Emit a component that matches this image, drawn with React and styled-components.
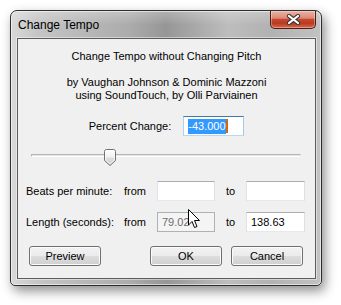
import React from 'react';
import styled, { createGlobalStyle } from 'styled-components';

const Global = createGlobalStyle`
  html, body { margin: 0; padding: 0; background: #ffffff; }
  body { font-family: "Liberation Sans", Arial, sans-serif; }
`;

const Page = styled.div`
  width: 341px;
  height: 305px;
  box-sizing: border-box;
  padding: 10px 0 0 10px;
  background: #fff;
  overflow: hidden;
`;

const Window = styled.div`
  position: relative;
  width: 312px;
  box-sizing: border-box;
  border: 1px solid #2e2e2e;
  border-radius: 7px 7px 5px 5px;
  padding: 0 5px 6px 6px;
  background:
    linear-gradient(180deg, rgba(255,255,255,0.25) 0px, rgba(255,255,255,0) 14px),
    linear-gradient(90deg, #d9d9d9 0%, #c6c6c6 8%, #b9b9b9 22%, #acacac 38%, #969696 50%, #a6a6a6 58%, #bdbdbd 70%, #b2b2b2 84%, #c2c2c2 100%);
  box-shadow:
    inset 0 0 0 1px rgba(255,255,255,0.55),
    3px 5px 12px rgba(0,0,0,0.45);
`;

const TitleBar = styled.div`
  height: 27px;
  display: flex;
  justify-content: space-between;
  align-items: flex-start;
`;

const Title = styled.div`
  padding: 7px 0 0 1px;
  font-size: 12px;
  line-height: 14px;
  color: #000;
`;

const CloseButton = styled.div`
  width: 46px;
  height: 18px;
  box-sizing: border-box;
  border: 1px solid #4e1a12;
  border-top: none;
  border-radius: 0 0 5px 5px;
  background: linear-gradient(180deg, #eab1a3 0%, #dc8b78 42%, #c5492f 50%, #b9391f 72%, #d6694d 100%);
  box-shadow: inset 0 0 0 1px rgba(255,255,255,0.35);
  display: flex;
  align-items: center;
  justify-content: center;
`;

const Client = styled.div`
  border: 1px solid #5c5c5c;
  background: #f0f0f0;
  padding: 11px 0 12px;
  font-size: 11px;
  color: #000;
  box-shadow: 0 0 0 1px rgba(255,255,255,0.45);
`;

const Para = styled.div`
  text-align: center;
  line-height: 13px;
  margin-top: ${p => p.$gap || 0}px;
`;

const PercentRow = styled.div`
  margin-top: 14px;
  display: flex;
  justify-content: center;
  align-items: center;
  gap: 12px;
`;

const TextBox = styled.div`
  width: ${p => p.$w}px;
  height: 20px;
  box-sizing: border-box;
  border: 1px solid ${p => (p.$focus ? '#569de5' : '#abadb3')};
  border-color: ${p => (p.$focus ? '#3d7bad #a4c9e3 #b7d9ed #b5cfe7' : p.$disabled ? '#adb2b5' : '#abadb3 #dbdfe6 #e3e9ef #e2e3ea')};
  background: ${p => (p.$disabled ? '#f4f4f4' : '#fff')};
  color: ${p => (p.$disabled ? '#6d6d6d' : '#000')};
  padding-left: 4px;
  display: flex;
  align-items: center;
  font-size: 11px;
  line-height: 13px;
`;

const Selection = styled.span`
  background: #3399ff;
  color: #fff;
  padding: 1px 0;
`;

const Caret = styled.span`
  display: inline-block;
  width: 2px;
  height: 14px;
  background: #d06a10;
`;

const SliderRow = styled.div`
  position: relative;
  margin: 13px 14px 0 13px;
  height: 17px;
`;

const Track = styled.div`
  position: absolute;
  left: 0;
  right: 0;
  top: 5px;
  height: 3px;
  box-sizing: border-box;
  border: 1px solid;
  border-color: #b4b4b4 #e6e6e6 #ffffff #b4b4b4;
  border-radius: 1px;
  background: #e7e7e7;
`;

const Thumb = styled.svg`
  position: absolute;
  top: 0;
  display: block;
`;

const FieldGrid = styled.div`
  margin-top: 15px;
  padding-left: 8px;
  display: grid;
  grid-template-columns: 98px 33px 58px 31px 59px;
  row-gap: 11px;
  align-items: center;
`;

const Label = styled.div`
  line-height: 13px;
  padding-left: ${p => p.$pad || 0}px;
`;

const ButtonRow = styled.div`
  margin-top: 14px;
  padding: 0 12px 0 11px;
  display: flex;
  align-items: center;
`;

const Button = styled.div`
  width: 72px;
  height: 20px;
  box-sizing: border-box;
  border: 1px solid #707070;
  border-radius: 3px;
  background: linear-gradient(180deg, #f2f2f2 0%, #ebebeb 48%, #dddddd 52%, #cfcfcf 100%);
  box-shadow: inset 0 0 0 1px #fbfbfb;
  display: flex;
  align-items: center;
  justify-content: center;
  font-size: 11px;
  color: #000;
  margin-left: ${p => p.$ml || 0}px;
`;

const Cursor = styled.svg`
  position: absolute;
  left: 177px;
  top: 198px;
  display: block;
`;

export default function App() {
  return (
    <Page>
      <Global />
      <Window>
        <TitleBar>
          <Title>Change Tempo</Title>
          <CloseButton>
            <svg width="15" height="11" viewBox="0 0 15 11">
              <path d="M3 2 L12 9 M12 2 L3 9" stroke="#3a3a3a" strokeWidth="4.2" strokeLinecap="round" fill="none" />
              <path d="M3 2 L12 9 M12 2 L3 9" stroke="#ffffff" strokeWidth="2.2" strokeLinecap="round" fill="none" />
            </svg>
          </CloseButton>
        </TitleBar>
        <Client>
          <Para>Change Tempo without Changing Pitch</Para>
          <Para $gap={13}>
            by Vaughan Johnson &amp; Dominic Mazzoni
            <br />
            using SoundTouch, by Olli Parviainen
          </Para>
          <PercentRow>
            <Label>Percent Change:</Label>
            <TextBox $w={61} $focus>
              <Selection>-43.000</Selection>
              <Caret />
            </TextBox>
          </PercentRow>
          <SliderRow>
            <Track />
            <Thumb width="12" height="17" viewBox="0 0 12 17" style={{ left: `${0.27 * 270}px` }}>
              <defs>
                <linearGradient id="tg" x1="0" y1="0" x2="0" y2="1">
                  <stop offset="0" stopColor="#ffffff" />
                  <stop offset="0.45" stopColor="#f2f2f2" />
                  <stop offset="0.55" stopColor="#dedede" />
                  <stop offset="1" stopColor="#cfcfcf" />
                </linearGradient>
              </defs>
              <path d="M0.5 2.5 Q0.5 0.5 2.5 0.5 H9.5 Q11.5 0.5 11.5 2.5 V11.5 L6 16.5 L0.5 11.5 Z" fill="url(#tg)" stroke="#6f6f6f" />
              <path d="M1.5 2.5 Q1.5 1.5 2.5 1.5 H9.5 Q10.5 1.5 10.5 2.5 V11 L6 15 L1.5 11 Z" fill="none" stroke="#ffffff" strokeOpacity="0.7" />
            </Thumb>
          </SliderRow>
          <FieldGrid>
            <Label>Beats per minute:</Label>
            <Label>from</Label>
            <TextBox $w={58} />
            <Label $pad={11}>to</Label>
            <TextBox $w={59} />
            <Label>Length (seconds):</Label>
            <Label>from</Label>
            <TextBox $w={58} $disabled>79.02</TextBox>
            <Label $pad={11}>to</Label>
            <TextBox $w={59}>138.63</TextBox>
          </FieldGrid>
          <ButtonRow>
            <Button>Preview</Button>
            <Button $ml={49}>OK</Button>
            <Button $ml={9}>Cancel</Button>
          </ButtonRow>
        </Client>
        <Cursor width="12" height="20" viewBox="0 0 12 20">
          <path d="M0.5 0.5 V16 L4 12.5 L6.5 18.5 L9 17.5 L6.5 11.5 H11.5 Z" fill="#ffffff" stroke="#000000" strokeWidth="1" strokeLinejoin="miter" />
        </Cursor>
      </Window>
    </Page>
  );
}
